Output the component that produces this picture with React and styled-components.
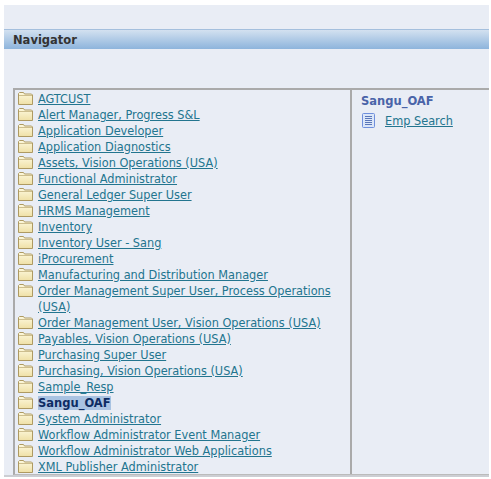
import React from 'react'
import styled, { createGlobalStyle } from 'styled-components'

const GlobalStyle = createGlobalStyle`
  html, body {
    margin: 0;
    padding: 0;
    background: #fff;
  }
`

const boldFont = `font-family: "DejaVu Sans", sans-serif; font-size: 11.5px; font-weight: bold; font-stretch: normal;`

const Page = styled.div`
  width: 485px;
  height: 470px;
  margin: 5px 0 0 4px;
  background: #e9edf5;
  border-bottom: 2px solid #ccced3;
  font-family: "DejaVu Sans Condensed", "DejaVu Sans", sans-serif;
  font-stretch: condensed;
  font-size: 12.6px;
  display: flex;
  flex-direction: column;
`

const TitleBar = styled.div`
  margin-top: 24px;
  height: 19px;
  line-height: 21px;
  padding-left: 9px;
  border-top: 1px solid #a4bfdd;
  background: linear-gradient(#d3e1f0, #8db4dc);
  color: #333;
  ${boldFont}
`

const Panel = styled.div`
  margin: 39px 0 0 9px;
  flex: 1;
  display: flex;
  border-top: 2px solid #aaa;
  border-left: 2px solid #aaa;
  border-bottom: 1px solid #bbb;
  min-height: 0;
`

const TreeColumn = styled.div`
  width: 332px;
  padding: 1px 0 0 3px;
  border-right: 2px solid #aaa;
`

const SideColumn = styled.div`
  flex: 1;
  padding: 3px 0 0 9px;
`

const Row = styled.div`
  display: flex;
  align-items: flex-start;
  line-height: 16px;
`

const FolderBox = styled.svg`
  width: 15px;
  height: 13px;
  margin: 1px 5px 0 0;
  flex-shrink: 0;
`

const ItemLink = styled.a`
  color: #23758f;
  text-decoration: underline;
  cursor: pointer;
  ${p => p.$active && `color: #0d2c63; background: #a9c3e2; text-decoration: none; ${boldFont}`}
`

const SideTitle = styled.div`
  color: #4a64a8;
  line-height: 16px;
  ${boldFont}
`

const SideRow = styled.div`
  display: flex;
  align-items: center;
  margin-top: 4px;
`

const PageIcon = styled.svg`
  width: 13px;
  height: 15px;
  margin: 0 10px 0 1px;
`

const Folder = () => (
  <FolderBox viewBox="0 0 15 13">
    <defs>
      <linearGradient id="folderFill" x1="0" y1="0" x2="0" y2="1">
        <stop offset="0" stopColor="#fdf9df" />
        <stop offset="1" stopColor="#efe0a6" />
      </linearGradient>
    </defs>
    <path
      d="M.5 3V1.5l1-1h4l1 1.5h7l1 1v9.5H.5z"
      fill="url(#folderFill)"
      stroke="#ae9a62"
    />
    <path d="M1 3.5h13" stroke="#ae9a62" strokeWidth=".6" />
  </FolderBox>
)

const items = [
  'AGTCUST',
  'Alert Manager, Progress S&L',
  'Application Developer',
  'Application Diagnostics',
  'Assets, Vision Operations (USA)',
  'Functional Administrator',
  'General Ledger Super User',
  'HRMS Management',
  'Inventory',
  'Inventory User - Sang',
  'iProcurement',
  'Manufacturing and Distribution Manager',
  'Order Management Super User, Process Operations (USA)',
  'Order Management User, Vision Operations (USA)',
  'Payables, Vision Operations (USA)',
  'Purchasing Super User',
  'Purchasing, Vision Operations (USA)',
  'Sample_Resp',
  'Sangu_OAF',
  'System Administrator',
  'Workflow Administrator Event Manager',
  'Workflow Administrator Web Applications',
  'XML Publisher Administrator',
]

const App = () => {
  return (
    <Page>
      <GlobalStyle />
      <TitleBar>Navigator</TitleBar>
      <Panel>
        <TreeColumn>
          {items.map(item => (
            <Row key={item}>
              <Folder />
              <span>
                <ItemLink $active={item === 'Sangu_OAF'}>{item}</ItemLink>
              </span>
            </Row>
          ))}
        </TreeColumn>
        <SideColumn>
          <SideTitle>Sangu_OAF</SideTitle>
          <SideRow>
            <PageIcon viewBox="0 0 13 15">
              <rect x=".5" y=".5" width="12" height="14" rx="1" fill="#dbe6f8" stroke="#6f8fdc" />
              <path d="M3 3.5h7M3 5.5h7M3 7.5h7M3 9.5h7M3 11.5h7" stroke="#5a76b8" />
            </PageIcon>
            <ItemLink>Emp Search</ItemLink>
          </SideRow>
        </SideColumn>
      </Panel>
    </Page>
  )
}

export default App
